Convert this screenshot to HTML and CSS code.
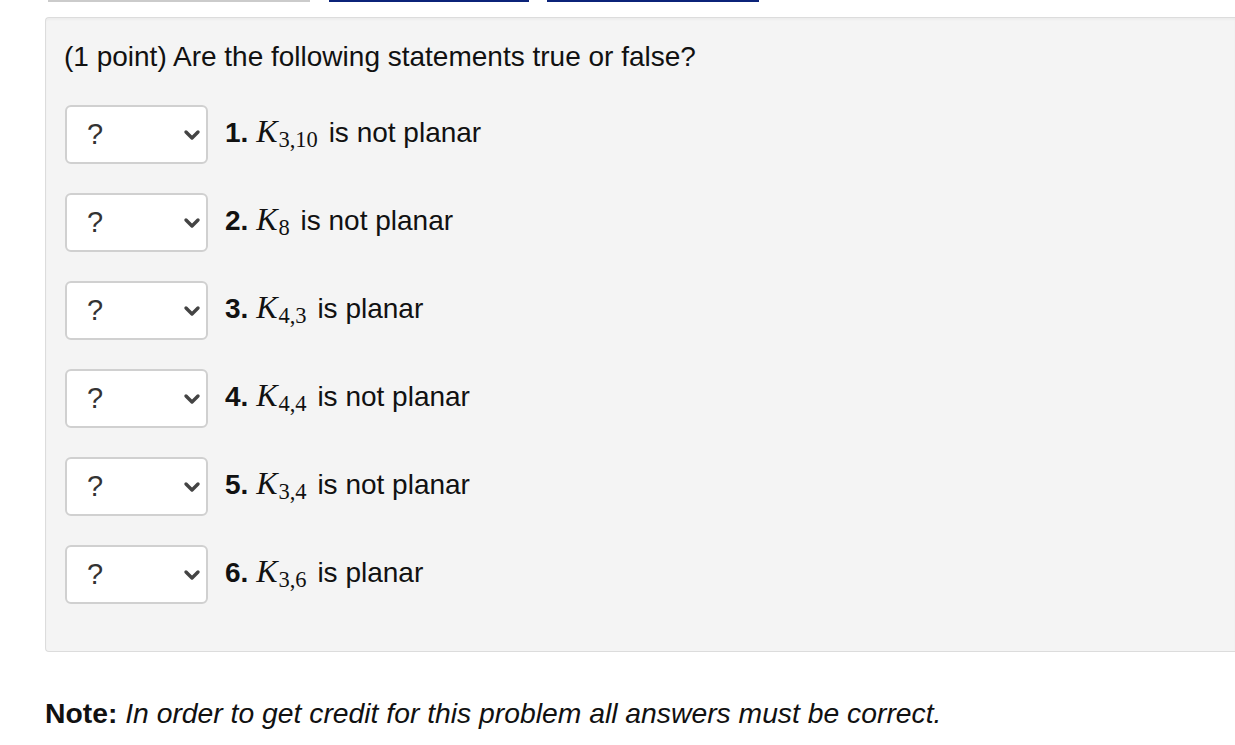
FILE: index.html
```html
<!DOCTYPE html>
<html lang="en">
<head>
<meta charset="utf-8">
<title>Planar graphs problem</title>
<link rel="stylesheet" href="styles.css">
</head>
<body>
<div class="topbar">
  <div class="tab"></div>
  <div class="btn btn-a"></div>
  <div class="btn btn-b"></div>
</div>
<div class="panel">
  <p class="title">(1 point) Are the following statements true or false?</p>
  <div class="list">
    <div class="row">
      <div class="select"><span class="q">?</span><svg class="chev" width="18" height="12" viewBox="0 0 18 12"><path d="M3 3 L9 9 L15 3" fill="none" stroke="#444" stroke-width="3.4" stroke-linecap="round" stroke-linejoin="round"/></svg></div>
      <div class="label"><b>1.</b> <span class="math"><i>K</i><sub>3,10</sub></span> is not planar</div>
    </div>
    <div class="row">
      <div class="select"><span class="q">?</span><svg class="chev" width="18" height="12" viewBox="0 0 18 12"><path d="M3 3 L9 9 L15 3" fill="none" stroke="#444" stroke-width="3.4" stroke-linecap="round" stroke-linejoin="round"/></svg></div>
      <div class="label"><b>2.</b> <span class="math"><i>K</i><sub>8</sub></span> is not planar</div>
    </div>
    <div class="row">
      <div class="select"><span class="q">?</span><svg class="chev" width="18" height="12" viewBox="0 0 18 12"><path d="M3 3 L9 9 L15 3" fill="none" stroke="#444" stroke-width="3.4" stroke-linecap="round" stroke-linejoin="round"/></svg></div>
      <div class="label"><b>3.</b> <span class="math"><i>K</i><sub>4,3</sub></span> is planar</div>
    </div>
    <div class="row">
      <div class="select"><span class="q">?</span><svg class="chev" width="18" height="12" viewBox="0 0 18 12"><path d="M3 3 L9 9 L15 3" fill="none" stroke="#444" stroke-width="3.4" stroke-linecap="round" stroke-linejoin="round"/></svg></div>
      <div class="label"><b>4.</b> <span class="math"><i>K</i><sub>4,4</sub></span> is not planar</div>
    </div>
    <div class="row">
      <div class="select"><span class="q">?</span><svg class="chev" width="18" height="12" viewBox="0 0 18 12"><path d="M3 3 L9 9 L15 3" fill="none" stroke="#444" stroke-width="3.4" stroke-linecap="round" stroke-linejoin="round"/></svg></div>
      <div class="label"><b>5.</b> <span class="math"><i>K</i><sub>3,4</sub></span> is not planar</div>
    </div>
    <div class="row">
      <div class="select"><span class="q">?</span><svg class="chev" width="18" height="12" viewBox="0 0 18 12"><path d="M3 3 L9 9 L15 3" fill="none" stroke="#444" stroke-width="3.4" stroke-linecap="round" stroke-linejoin="round"/></svg></div>
      <div class="label"><b>6.</b> <span class="math"><i>K</i><sub>3,6</sub></span> is planar</div>
    </div>
  </div>
</div>
<p class="note"><b>Note:</b> <i>In order to get credit for this problem all answers must be correct.</i></p>
</body>
</html>
```
FILE: styles.css
```css
html, body {
  margin: 0;
  padding: 0;
  background: #fff;
}
body {
  font-family: "Liberation Sans", Arial, Helvetica, sans-serif;
  color: #111;
  overflow: hidden;
}
.topbar {
  display: flex;
  height: 2px;
  padding-left: 48px;
}
.tab {
  width: 262px;
  height: 2px;
  background: #cbcbcb;
}
.btn {
  height: 2px;
  background: #0b2379;
}
.btn-a {
  width: 200px;
  margin-left: 19px;
}
.btn-b {
  width: 212px;
  margin-left: 18px;
}
.panel {
  margin: 15px 0 0 45px;
  border: 1px solid #dcdcdc;
  border-right: none;
  border-radius: 4px 0 0 4px;
  background: #f4f4f4;
  padding: 23px 0 47px 18px;
  box-shadow: inset 0 2px 2px rgba(0, 0, 0, 0.03);
}
.title {
  margin: 0 0 32px;
  font-size: 28px;
  line-height: 32px;
}
.list {
  display: flex;
  flex-direction: column;
  gap: 29px;
}
.row {
  display: flex;
  align-items: center;
  gap: 17px;
}
.select {
  box-sizing: border-box;
  width: 143px;
  height: 59px;
  margin-left: 1px;
  border: 2px solid #d0d0d0;
  border-radius: 6px;
  background: #fff;
  display: flex;
  align-items: center;
  justify-content: space-between;
  padding: 0 5px 0 20px;
}
.q {
  font-size: 29px;
  line-height: 1;
  color: #333;
}
.chev {
  display: block;
  margin-top: 1px;
}
.label {
  font-size: 28px;
  line-height: 32px;
  white-space: nowrap;
  margin-top: -5px;
}
.label b {
  font-weight: bold;
}
.math {
  font-family: "Liberation Serif", "Times New Roman", serif;
  margin-right: 3px;
}
.math i {
  font-size: 32px;
  font-style: italic;
  margin-right: 1px;
}
.math sub {
  font-size: 22.5px;
  vertical-align: -5px;
  line-height: 0;
}
.note {
  margin: 45px 0 0 45px;
  font-size: 28.3px;
  line-height: 32px;
}
```
